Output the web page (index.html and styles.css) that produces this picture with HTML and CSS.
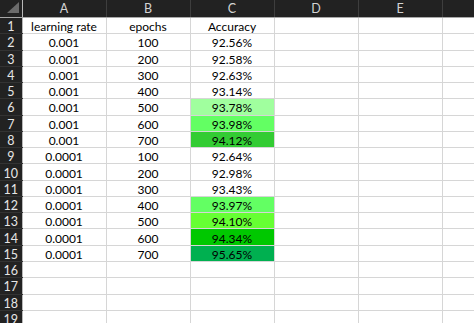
FILE: index.html
```html
<!DOCTYPE html>
<html>
<head>
<meta charset="utf-8">
<link rel="stylesheet" href="styles.css">
</head>
<body>
<div class="sheet">
<table class="grid">
<colgroup><col class="c-rh"><col class="c"><col class="c"><col class="c"><col class="c"><col class="c"><col class="c"></colgroup>
<thead>
<tr class="hdr"><th class="corner"><svg width="14" height="12" viewBox="0 0 14 12"><polygon points="13,0 13,11 1,11" fill="#6b6b6b"/></svg></th><th>A</th><th>B</th><th>C</th><th>D</th><th>E</th><th></th></tr>
</thead>
<tbody>
<tr><th>1</th><td>learning rate</td><td>epochs</td><td>Accuracy</td><td></td><td></td><td></td></tr>
<tr><th>2</th><td>0.001</td><td>100</td><td>92.56%</td><td></td><td></td><td></td></tr>
<tr><th>3</th><td>0.001</td><td>200</td><td>92.58%</td><td></td><td></td><td></td></tr>
<tr><th>4</th><td>0.001</td><td>300</td><td>92.63%</td><td></td><td></td><td></td></tr>
<tr><th>5</th><td>0.001</td><td>400</td><td>93.14%</td><td></td><td></td><td></td></tr>
<tr><th>6</th><td>0.001</td><td>500</td><td class="g1">93.78%</td><td></td><td></td><td></td></tr>
<tr><th>7</th><td>0.001</td><td>600</td><td class="g2">93.98%</td><td></td><td></td><td></td></tr>
<tr><th>8</th><td>0.001</td><td>700</td><td class="g3">94.12%</td><td></td><td></td><td></td></tr>
<tr><th>9</th><td>0.0001</td><td>100</td><td>92.64%</td><td></td><td></td><td></td></tr>
<tr><th>10</th><td>0.0001</td><td>200</td><td>92.98%</td><td></td><td></td><td></td></tr>
<tr><th>11</th><td>0.0001</td><td>300</td><td>93.43%</td><td></td><td></td><td></td></tr>
<tr><th>12</th><td>0.0001</td><td>400</td><td class="g2">93.97%</td><td></td><td></td><td></td></tr>
<tr><th>13</th><td>0.0001</td><td>500</td><td class="g4">94.10%</td><td></td><td></td><td></td></tr>
<tr><th>14</th><td>0.0001</td><td>600</td><td class="g5">94.34%</td><td></td><td></td><td></td></tr>
<tr class="sel"><th>15</th><td>0.0001</td><td>700</td><td class="g6">95.65%</td><td></td><td></td><td></td></tr>
<tr><th>16</th><td></td><td></td><td></td><td></td><td></td><td></td></tr>
<tr><th>17</th><td></td><td></td><td></td><td></td><td></td><td></td></tr>
<tr><th>18</th><td></td><td></td><td></td><td></td><td></td><td></td></tr>
<tr><th>19</th><td></td><td></td><td></td><td></td><td></td><td></td></tr>
</tbody>
</table>
</div>
</body>
</html>
```
FILE: styles.css
```css
html, body {
  margin: 0;
  padding: 0;
  background: #ffffff;
  overflow: hidden;
}
.sheet {
  width: 474px;
  height: 323px;
  overflow: hidden;
}
.grid {
  border-collapse: collapse;
  table-layout: fixed;
  width: 526px;
  font-family: Lato, "Liberation Sans", Arial, sans-serif;
  font-size: 12px;
  color: #000;
}
.c-rh { width: 22px; }
.c { width: 84px; }
.grid td {
  height: 13.27px;
  padding: 2px 0 0 0;
  text-align: center;
  border-right: 1px solid #d6d6d6;
  border-bottom: 1px solid #d6d6d6;
  line-height: 13px;
  white-space: nowrap;
  overflow: hidden;
}
.grid tbody th {
  height: 13.27px;
  background: #222222;
  color: #e6e6e6;
  font-weight: normal;
  padding: 2px 0 0 0;
  text-align: center;
  border-right: 1px solid #b8b8b8;
  border-bottom: 1px solid #333333;
  line-height: 13px;
  font-size: 12.5px;
}
.hdr th {
  height: 17px;
  background: #222222;
  color: #d4d4d4;
  font-weight: normal;
  padding: 0;
  text-align: center;
  border-right: 1px solid #3e3e3e;
  border-bottom: 1px solid #a8a8a8;
  line-height: 17px;
  font-size: 12.5px;
}
.hdr th.corner {
  text-align: right;
  vertical-align: bottom;
  line-height: 0;
  border-right: 1px solid #b8b8b8;
}
.corner svg { display: inline-block; margin: 0 2px 3px 0; }
.sel th {
  background: #555555;
  color: #ffffff;
}
.g1 { background: #a0ff9e; }
.g2 { background: #63ff63; }
.g3 { background: #33cc33; }
.g4 { background: #66ff33; }
.g5 { background: #00c800; }
.g6 { background: #00b050; }
```
